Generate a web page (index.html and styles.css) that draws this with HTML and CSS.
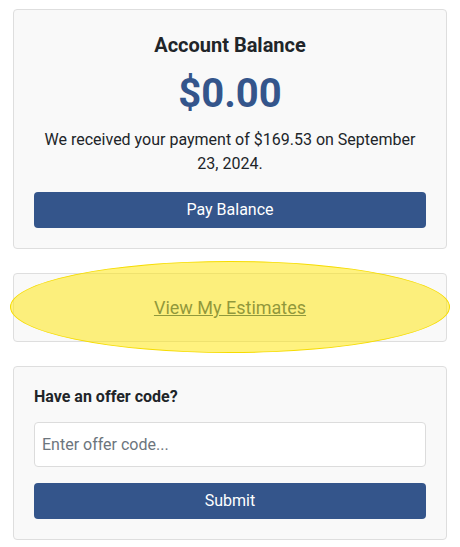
FILE: index.html
```html
<!DOCTYPE html>
<html lang="en">
<head>
<meta charset="utf-8">
<title>Account</title>
<link rel="stylesheet" href="styles.css">
</head>
<body>
  <section class="card balance">
    <h2 class="balance-title">Account Balance</h2>
    <div class="balance-amount">$0.00</div>
    <p class="balance-note">We received your payment of $169.53 on September 23, 2024.</p>
    <button class="btn" type="button">Pay Balance</button>
  </section>

  <section class="card estimates">
    <a class="estimates-link" href="#">View My Estimates</a>
  </section>

  <section class="card offer">
    <h3 class="offer-title">Have an offer code?</h3>
    <input class="offer-input" type="text" placeholder="Enter offer code...">
    <button class="btn" type="button">Submit</button>
  </section>

  <div class="highlight"></div>
</body>
</html>
```

FILE: styles.css
```css
* {
  box-sizing: border-box;
}

html, body {
  background: #ffffff;
}

body {
  margin: 0;
  padding: 9px 13px;
  font-family: Roboto, "Liberation Sans", sans-serif;
  color: #212529;
  display: flex;
  flex-direction: column;
  gap: 24px;
}

.card {
  background: #f9f9f9;
  border: 1px solid #dedede;
  border-radius: 4px;
  padding: 20px;
  display: flex;
  flex-direction: column;
}

.balance {
  text-align: center;
}

.balance-title {
  margin: 0;
  font-size: 20px;
  font-weight: 700;
  line-height: 30px;
}

.balance-amount {
  margin-top: 4px;
  font-size: 40px;
  font-weight: 700;
  line-height: 60px;
  color: #34558b;
}

.balance-note {
  margin: 4px 0 16px;
  font-size: 16px;
  line-height: 24px;
}

.btn {
  height: 36px;
  border: 0;
  border-radius: 4px;
  background: #34558b;
  color: #ffffff;
  font-family: Roboto, "Liberation Sans", sans-serif;
  font-size: 16px;
  line-height: 24px;
  padding: 0;
}

.estimates {
  align-items: center;
}

.estimates-link {
  font-size: 18px;
  line-height: 27px;
  color: #1e4a78;
  text-decoration: underline;
}

.offer-title {
  margin: 0 0 16px;
  font-size: 16px;
  font-weight: 700;
  line-height: 19px;
}

.offer-input {
  height: 45px;
  margin-bottom: 16px;
  padding: 0 7px;
  background: #ffffff;
  border: 1px solid #dcdcdc;
  border-radius: 4px;
  font-family: Roboto, "Liberation Sans", sans-serif;
  font-size: 16px;
  color: #212529;
}

.offer-input::placeholder {
  color: #6c757d;
  opacity: 1;
}

.highlight {
  position: absolute;
  left: 10px;
  top: 261px;
  width: 440px;
  height: 92px;
  border-radius: 50%;
  background: rgba(255, 230, 0, 0.5);
  border: 1px solid #f6dc00;
  pointer-events: none;
}
```
